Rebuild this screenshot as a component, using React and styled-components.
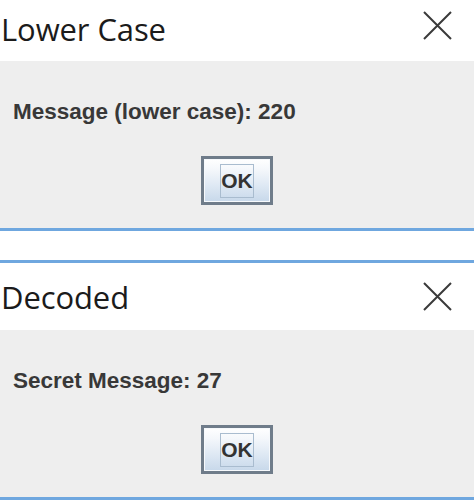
import React from "react";
import styled, { createGlobalStyle } from "styled-components";

const Global = createGlobalStyle`
  html, body { margin: 0; padding: 0; background: #ffffff; }
  body { width: 474px; height: 500px; overflow: hidden; }
`;

const Page = styled.div`
  display: flex;
  flex-direction: column;
  gap: 29px;
  width: 474px;
`;

const Window = styled.section`
  display: flex;
  flex-direction: column;
  background: #ffffff;
  margin-top: ${(p) => (p.$cropTop ? `-${p.$cropTop}px` : "0")};
  border-top: ${(p) => (p.$topBorder ? "3px solid #6fa7df" : "none")};
  border-bottom: 3px solid #6fa7df;
`;

const TitleBar = styled.header`
  display: flex;
  align-items: center;
  justify-content: space-between;
  height: 67px;
  padding: 0 22px 0 1px;
  background: #ffffff;
`;

const Title = styled.h1`
  margin: 0;
  padding-top: ${(p) => p.$drop || 0}px;
  font-family: "Open Sans", "Noto Sans", sans-serif;
  font-weight: 400;
  font-size: 31px;
  line-height: 40px;
  color: #1b1b1b;
  letter-spacing: -0.1px;
`;

const CloseButton = styled.button`
  display: flex;
  align-items: center;
  justify-content: center;
  width: 29px;
  height: 29px;
  padding: 0;
  border: none;
  background: transparent;
  margin-top: ${(p) => p.$nudge || 0}px;
`;

const Content = styled.div`
  display: flex;
  flex-direction: column;
  height: 167px;
  box-sizing: border-box;
  padding: 40px 0 0 13px;
  background: #eeeeee;
`;

const Message = styled.p`
  margin: 0;
  font-family: "Liberation Sans", Arial, sans-serif;
  font-weight: 700;
  font-size: 22.5px;
  line-height: 22px;
  color: #383838;
`;

const ButtonRow = styled.div`
  display: flex;
  justify-content: center;
  margin-top: 33px;
  margin-left: -13px;
`;

const OkButton = styled.button`
  display: flex;
  align-items: center;
  justify-content: center;
  width: 72px;
  height: 49px;
  box-sizing: border-box;
  padding: 0;
  border: 3px solid #6f7c8a;
  background: linear-gradient(
    to bottom,
    #ffffff 0%,
    #f4f7fb 25%,
    #dfe9f4 60%,
    #c7d8ea 100%
  );
  box-shadow: inset 0 0 0 1px #f6f9fc;
`;

const FocusRing = styled.span`
  display: flex;
  align-items: center;
  justify-content: center;
  width: 34px;
  height: 34px;
  box-sizing: border-box;
  border: 1px solid #a9bccf;
  font-family: "Liberation Sans", Arial, sans-serif;
  font-weight: 700;
  font-size: 21px;
  color: #333333;
`;

const XIcon = () => (
  <svg width="29" height="29" viewBox="0 0 29 29">
    <path
      d="M1 1 L28 28 M28 1 L1 28"
      stroke="#3a3a3a"
      strokeWidth="2"
      fill="none"
    />
  </svg>
);

const Dialog = ({ title, message, cropTop, topBorder, nudge, drop }) => (
  <Window $cropTop={cropTop} $topBorder={topBorder}>
    <TitleBar>
      <Title $drop={drop}>{title}</Title>
      <CloseButton $nudge={nudge} aria-label="Close">
        <XIcon />
      </CloseButton>
    </TitleBar>
    <Content>
      <Message>{message}</Message>
      <ButtonRow>
        <OkButton>
          <FocusRing>OK</FocusRing>
        </OkButton>
      </ButtonRow>
    </Content>
  </Window>
);

export default function App() {
  return (
    <>
      <Global />
      <Page>
        <Dialog
          title="Lower Case"
          message="Message (lower case): 220"
          cropTop={6}
          nudge={-4}
          drop={2}
        />
        <Dialog title="Decoded" message="Secret Message: 27" topBorder />
      </Page>
    </>
  );
}
